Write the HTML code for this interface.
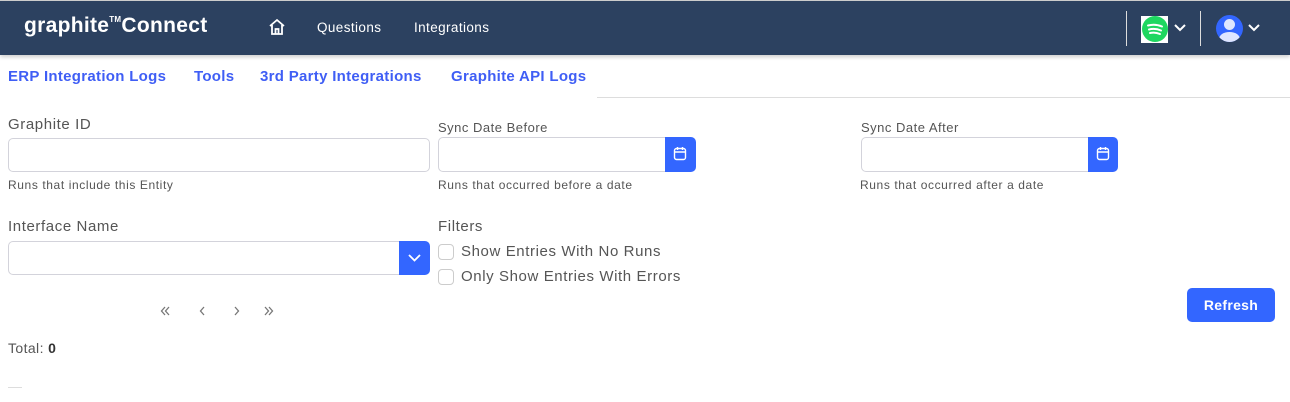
<!DOCTYPE html>
<html><head><style>
*{box-sizing:border-box;margin:0;padding:0}
body{width:1290px;height:402px;background:#fff;font-family:"Liberation Sans",sans-serif;position:relative;overflow:hidden;color:#555}
.a{position:absolute;white-space:nowrap}
.hdr{position:absolute;left:0;top:0;width:1290px;height:55px;background:#2c4160;border-top:1px solid #ccc;box-shadow:0 2px 4px rgba(0,0,0,.2)}
.link{color:#3f5ef5;font-size:15px;font-weight:bold;top:68px;letter-spacing:.3px}
.inp{position:absolute;border:1px solid #d3d3db;border-radius:5px;background:#fff}
.btn{position:absolute;background:#3366ff;border-radius:0 5px 5px 0}
.lbl{font-size:15px;color:#555;letter-spacing:.6px}
.sl{font-size:13px;color:#555;letter-spacing:.5px}
.hint{font-size:12px;color:#555;letter-spacing:.6px}
.cb{position:absolute;width:16px;height:16px;border:1px solid #ccc;border-radius:4px;background:#fff}
</style></head><body>
<div class="hdr">
<div class="a" style="left:24px;top:13px;color:#fff;font-size:21px;font-weight:bold;letter-spacing:.3px">graphite<span style="font-size:8px;vertical-align:top;position:relative;top:1px">TM</span>Connect</div>
<svg class="a" style="left:268px;top:17px" width="18" height="18" viewBox="0 0 18 18" fill="none" stroke="#fff" stroke-width="1.8"><path d="M2 8L9 2l7 6M4 7v9h10V7M7.5 16v-5h3v5"/></svg>
<div class="a" style="left:317px;top:19px;color:#fff;font-size:13.5px;letter-spacing:.4px">Questions</div>
<div class="a" style="left:414px;top:19px;color:#fff;font-size:13.5px;letter-spacing:.4px">Integrations</div>
<div class="a" style="left:1126px;top:10px;width:1px;height:35px;background:#ddd"></div>
<div class="a" style="left:1200px;top:10px;width:1px;height:35px;background:#ddd"></div>
<div class="a" style="left:1141px;top:15px;width:27px;height:27px;background:#fff"></div>
<div class="a" style="left:1142px;top:15px;width:26px;height:26px;border-radius:50%;background:#1ed760"></div>
<svg class="a" style="left:1142px;top:15px" width="26" height="26" viewBox="0 0 26 26" fill="none" stroke="#fff" stroke-width="2" stroke-linecap="round"><path d="M6 9.5q7-2 14 1M7 13.5q6-1.6 12 1M8 17q5-1.2 10 1"/></svg>
<svg class="a" style="left:1174px;top:23px" width="12" height="8" viewBox="0 0 12 8" fill="none" stroke="#fff" stroke-width="2"><path d="M1 1l5 5 5-5"/></svg>
<div class="a" style="left:1216px;top:14px;width:27px;height:27px;border-radius:50%;background:#3366ff;overflow:hidden">
<div class="a" style="left:8px;top:4px;width:11px;height:11px;border-radius:50%;background:#dfe6ff"></div>
<div class="a" style="left:3px;top:17px;width:21px;height:14px;border-radius:50% 50% 0 0;background:#dfe6ff"></div></div>
<svg class="a" style="left:1248px;top:23px" width="12" height="8" viewBox="0 0 12 8" fill="none" stroke="#fff" stroke-width="2"><path d="M1 1l5 5 5-5"/></svg>
</div>
<div class="a link" style="left:8px">ERP Integration Logs</div>
<div class="a link" style="left:194px">Tools</div>
<div class="a link" style="left:260px">3rd Party Integrations</div>
<div class="a link" style="left:451px">Graphite API Logs</div>
<div class="a" style="left:597px;top:97px;width:693px;height:1px;background:#ddd"></div>

<div class="a lbl" style="left:8px;top:116px">Graphite ID</div>
<div class="inp" style="left:8px;top:138px;width:422px;height:34px"></div>
<div class="a hint" style="left:8px;top:178px">Runs that include this Entity</div>

<div class="a sl" style="left:438px;top:120px">Sync Date Before</div>
<div class="inp" style="left:438px;top:137px;width:230px;height:35px;border-radius:5px 0 0 5px"></div>
<div class="btn" style="left:665px;top:137px;width:31px;height:35px"></div>
<svg class="a" style="left:673px;top:146px" width="14" height="15" viewBox="0 0 14 15" fill="none" stroke="#fff" stroke-width="1.4"><rect x="1.5" y="2.5" width="11" height="11" rx="2"/><path d="M1.5 6h11M4.5 1v3M9.5 1v3"/></svg>
<div class="a hint" style="left:438px;top:178px">Runs that occurred before a date</div>

<div class="a sl" style="left:861px;top:120px">Sync Date After</div>
<div class="inp" style="left:861px;top:137px;width:230px;height:35px;border-radius:5px 0 0 5px"></div>
<div class="btn" style="left:1088px;top:137px;width:30px;height:35px"></div>
<svg class="a" style="left:1096px;top:146px" width="14" height="15" viewBox="0 0 14 15" fill="none" stroke="#fff" stroke-width="1.4"><rect x="1.5" y="2.5" width="11" height="11" rx="2"/><path d="M1.5 6h11M4.5 1v3M9.5 1v3"/></svg>
<div class="a hint" style="left:860px;top:178px">Runs that occurred after a date</div>

<div class="a lbl" style="left:8px;top:218px">Interface Name</div>
<div class="inp" style="left:8px;top:241px;width:394px;height:34px;border-radius:5px 0 0 5px"></div>
<div class="btn" style="left:399px;top:241px;width:31px;height:34px"></div>
<svg class="a" style="left:408px;top:254px" width="13" height="8" viewBox="0 0 13 8" fill="none" stroke="#fff" stroke-width="1.8"><path d="M1 1l5.5 5.5L12 1"/></svg>

<div class="a lbl" style="left:438px;top:218px">Filters</div>
<div class="cb" style="left:438px;top:244px"></div>
<div class="a lbl" style="left:461px;top:243px">Show Entries With No Runs</div>
<div class="cb" style="left:438px;top:269px"></div>
<div class="a lbl" style="left:461px;top:268px">Only Show Entries With Errors</div>

<svg class="a" style="left:160px;top:305px" width="120" height="12" viewBox="0 0 120 12" fill="none" stroke="#777" stroke-width="1.3"><path d="M5 2L1.5 6 5 10M9 2L5.5 6 9 10M44 2l-3.5 4 3.5 4M75 2l3.5 4-3.5 4M105 2l3.5 4-3.5 4M109 2l3.5 4-3.5 4"/></svg>

<div class="a" style="left:1187px;top:288px;width:88px;height:34px;background:#3366ff;border-radius:5px;color:#fff;font-weight:bold;font-size:14px;text-align:center;line-height:34px;letter-spacing:.3px">Refresh</div>

<div class="a" style="left:8px;top:340px;font-size:14px;color:#555;letter-spacing:.4px">Total: <b style="color:#333">0</b></div>
<div class="a" style="left:8px;top:387px;width:14px;height:1px;background:#ddd"></div>
</body></html>
